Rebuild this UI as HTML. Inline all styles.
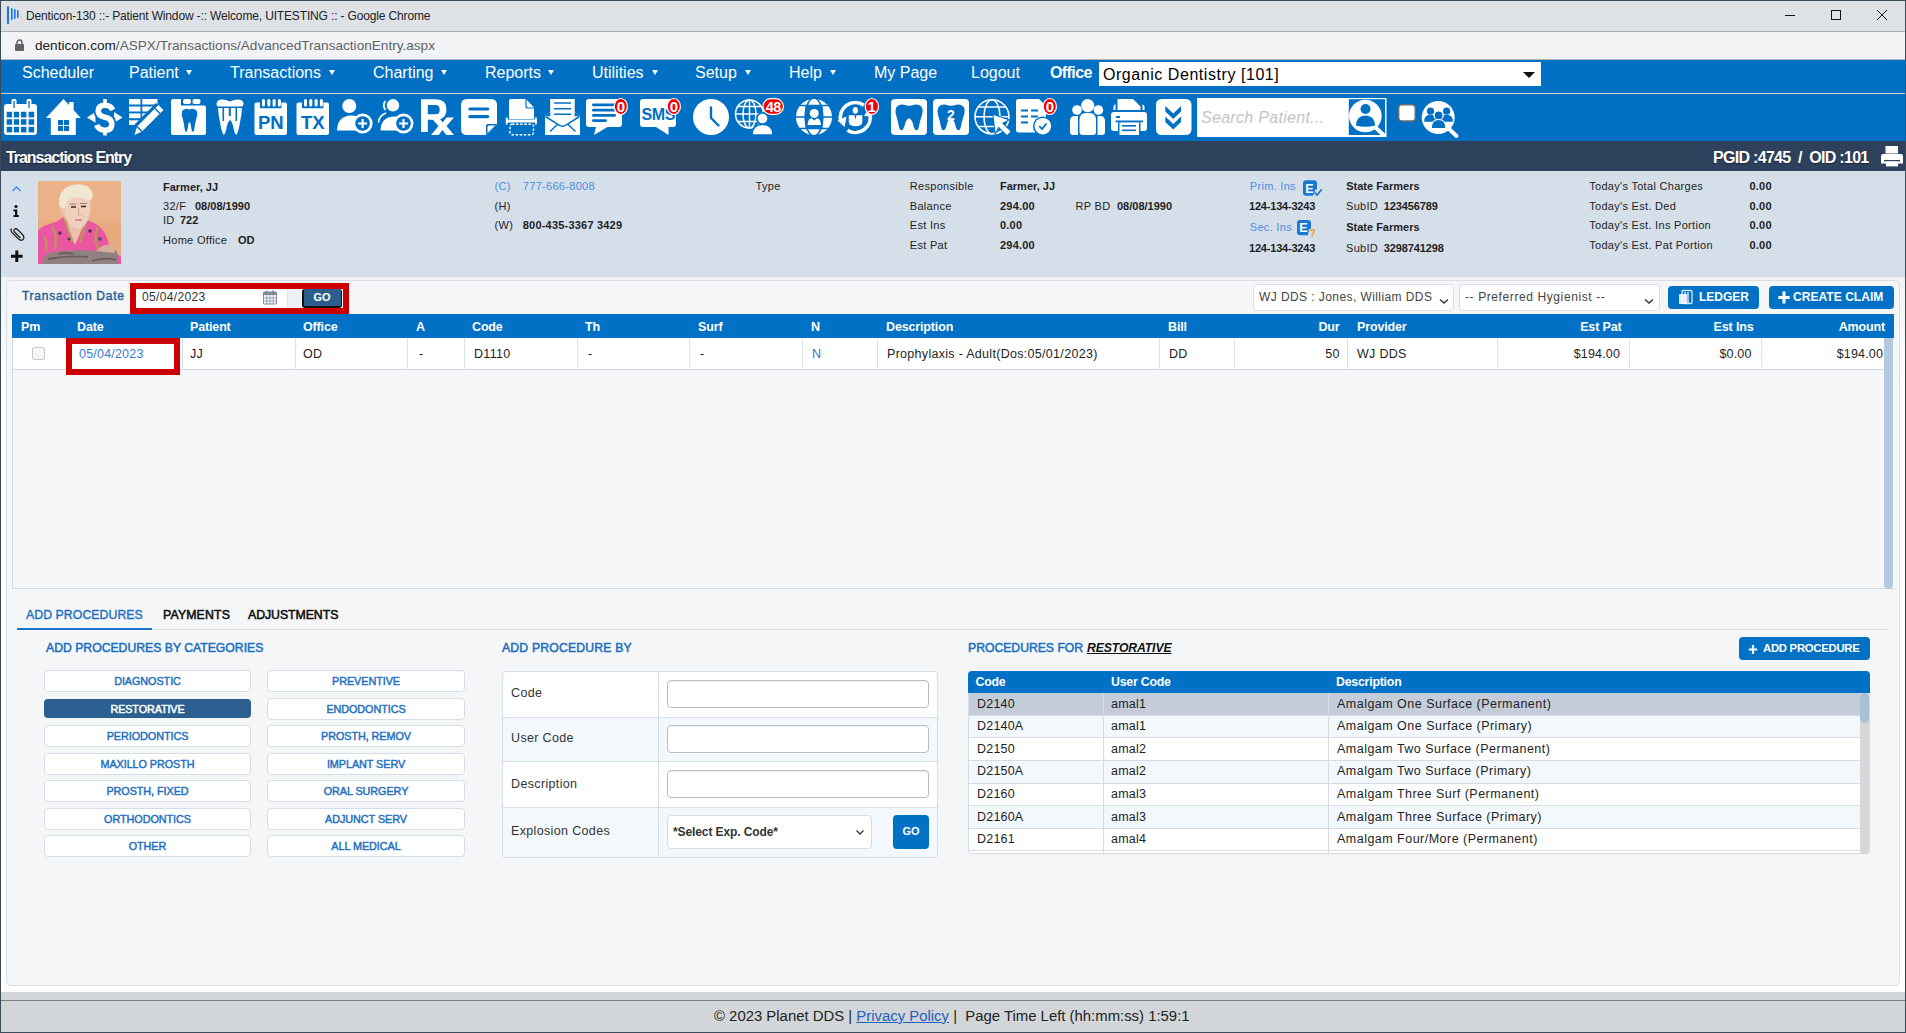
<!DOCTYPE html>
<html><head><meta charset="utf-8">
<style>
*{box-sizing:border-box;margin:0;padding:0}
html,body{width:1906px;height:1033px;overflow:hidden;background:#fff;font-family:"Liberation Sans",sans-serif;color:#222}
.a{position:absolute}
.t{position:absolute;white-space:nowrap;line-height:1}
#frame{position:absolute;left:0;top:0;width:1906px;height:1033px;border:1px solid #3a4b5c;pointer-events:none;z-index:50}
/* chrome */
#titlebar{left:1px;top:1px;width:1904px;height:31px;background:#dee1e6;border-bottom:1px solid #a9abae}
#addrbar{left:1px;top:32px;width:1904px;height:28px;background:#f1f3f4;border-bottom:1px solid #b9b7b3}
#nav{left:1px;top:60px;width:1904px;height:34px;background:#0070c5;border-bottom:1px solid #cdd0d3}
#icons{left:1px;top:94px;width:1904px;height:47px;background:#0070c5}
#darkbar{left:1px;top:141px;width:1904px;height:30px;background:#2d405c}
#panel{left:1px;top:171px;width:1904px;height:105px;background:#d5dfe9}
.nv{position:absolute;top:65px;color:#fff;font-size:16px;line-height:16px;white-space:nowrap}
.arr{position:absolute;top:70px;width:0;height:0;border-left:3px solid transparent;border-right:3px solid transparent;border-top:5px solid #fff}
.ic{position:absolute;top:99px;height:36px}
.badge{position:absolute;top:100px;height:14px;min-width:14px;padding:0 2px;border-radius:7px;background:#e00;border:1px solid #fff;color:#fff;font-weight:bold;font-size:12px;line-height:12px;text-align:center}
.pt{position:absolute;white-space:nowrap;font-size:11px;line-height:11px;color:#1e1e1e}
.pb{font-weight:bold}
.lb{color:#4a8fe0}
</style></head><body>
<div id="frame"></div>
<div id="titlebar" class="a"></div>
<div id="addrbar" class="a"></div>
<div id="nav" class="a"></div>
<div id="icons" class="a"></div>
<div id="darkbar" class="a"></div>
<div id="panel" class="a"></div>
<!-- title bar content -->
<svg class="a" style="left:7px;top:6px" width="12" height="18" viewBox="0 0 12 18"><rect x="0" y="0" width="2" height="18" rx="1" fill="#1a73e8"/><rect x="4" y="2" width="1.6" height="12" rx=".8" fill="#1a73e8"/><rect x="7" y="3" width="1.6" height="10" rx=".8" fill="#1a73e8"/><rect x="10" y="4" width="1.6" height="8" rx=".8" fill="#1a73e8"/></svg>
<div class="t" style="left:26px;top:10px;font-size:12px;color:#202124;letter-spacing:-0.15px">Denticon-130 ::- Patient Window -:: Welcome, UITESTING :: - Google Chrome</div>
<svg class="a" style="left:1784px;top:10px" width="110" height="12" viewBox="0 0 110 12"><rect x="1" y="5" width="10" height="1" fill="#111"/><rect x="47.5" y="0.5" width="9" height="9" fill="none" stroke="#111" stroke-width="1"/><path d="M93 0 L103 10 M103 0 L93 10" stroke="#111" stroke-width="1"/></svg>
<svg class="a" style="left:15px;top:39px" width="9" height="12" viewBox="0 0 9 12"><path d="M2 5 V3.5 A2.5 2.5 0 0 1 7 3.5 V5" fill="none" stroke="#5f6368" stroke-width="1.5"/><rect x="0" y="5" width="9" height="7" rx="1" fill="#5f6368"/></svg>
<div class="t" style="left:35px;top:39px;font-size:13.6px;color:#202124">denticon.com<span style="color:#5f6368">/ASPX/Transactions/AdvancedTransactionEntry.aspx</span></div>

<!-- nav -->
<div class="nv" style="left:22px">Scheduler</div>
<div class="nv" style="left:129px">Patient</div><div class="arr" style="left:186px"></div>
<div class="nv" style="left:230px">Transactions</div><div class="arr" style="left:329px"></div>
<div class="nv" style="left:373px">Charting</div><div class="arr" style="left:441px"></div>
<div class="nv" style="left:485px">Reports</div><div class="arr" style="left:548px"></div>
<div class="nv" style="left:592px">Utilities</div><div class="arr" style="left:652px"></div>
<div class="nv" style="left:695px">Setup</div><div class="arr" style="left:745px"></div>
<div class="nv" style="left:789px">Help</div><div class="arr" style="left:830px"></div>
<div class="nv" style="left:874px">My Page</div>
<div class="nv" style="left:971px">Logout</div>
<div class="nv" style="left:1050px;font-weight:bold;letter-spacing:-0.6px">Office</div>
<div class="a" style="left:1099px;top:62px;width:442px;height:24px;background:#fff"></div>
<div class="t" style="left:1103px;top:67px;font-size:16px;letter-spacing:0.55px;color:#000">Organic Dentistry [101]</div>
<div class="a" style="left:1523px;top:72px;width:0;height:0;border-left:6px solid transparent;border-right:6px solid transparent;border-top:6px solid #111"></div>

<!-- ICONS placeholder -->
<svg class="a" style="left:0;top:94px" width="1500" height="47" viewBox="0 94 1500 47">
<g fill="#fff">
<!-- 1 calendar -->
<rect x="4" y="104" width="33" height="31" rx="3"/>
<rect x="11.5" y="99" width="5" height="10" rx="1.5"/><rect x="26.5" y="99" width="5" height="10" rx="1.5"/>
<g fill="#0070c5"><rect x="13.4" y="101" width="1.3" height="7"/><rect x="28.4" y="101" width="1.3" height="7"/>
<rect x="6.7" y="111.8" width="5.4" height="5.6"/><rect x="13.8" y="111.8" width="5.4" height="5.6"/><rect x="21" y="111.8" width="5.4" height="5.6"/><rect x="28.6" y="111.8" width="5.6" height="5.6"/>
<rect x="6.7" y="119.2" width="5.4" height="5.6"/><rect x="13.8" y="119.2" width="5.4" height="5.6"/><rect x="21" y="119.2" width="5.4" height="5.6"/><rect x="28.6" y="119.2" width="5.6" height="5.6"/>
<rect x="6.7" y="126.8" width="5.4" height="5.6"/><rect x="13.8" y="126.8" width="5.4" height="5.6"/><rect x="21" y="126.8" width="5.4" height="5.6"/><rect x="28.6" y="126.8" width="5.6" height="5.6"/></g>
<!-- 2 house -->
<path d="M46 118 L63.5 99 L69 105 V102 H73.6 V110 L80.7 118 H75.8 V135 H50.8 V118 Z"/>
<g fill="#0070c5"><rect x="58" y="120" width="5" height="5"/><rect x="64" y="120" width="5" height="5"/><rect x="58" y="126" width="5" height="5"/><rect x="64" y="126" width="5" height="5"/></g>
<!-- 3 dollar -->
<path d="M87 117.4 L95.5 112 V122.8 Z M122.6 117.4 L114.1 112 V122.8 Z"/>
<path d="M112.8 110 Q110.5 105.2 105 105.2 Q98.2 105.2 98.2 111 Q98.2 115.8 105 117.2 Q111.8 118.6 111.8 124.2 Q111.8 130.2 105 130.2 Q98.8 130.2 96.6 125" fill="none" stroke="#0070c5" stroke-width="9"/>
<path d="M112.8 110 Q110.5 105.2 105 105.2 Q98.2 105.2 98.2 111 Q98.2 115.8 105 117.2 Q111.8 118.6 111.8 124.2 Q111.8 130.2 105 130.2 Q98.8 130.2 96.6 125" fill="none" stroke="#fff" stroke-width="5.6"/>
<rect x="103.2" y="99" width="3.6" height="5"/><rect x="103.2" y="131" width="3.6" height="4.5"/>
<!-- 4 edit -->
<rect x="129" y="99" width="11.5" height="5.5"/><rect x="142.3" y="99" width="15.2" height="5.5"/>
<rect x="129" y="106.5" width="11.5" height="5"/><rect x="142.3" y="106.5" width="12" height="5"/>
<rect x="129" y="113.4" width="11.5" height="4.8"/><rect x="142.3" y="113.4" width="6" height="4.8"/>
<rect x="129" y="120.3" width="11.5" height="4.6"/>
<path d="M131 137 L135 124 L156 103 L167 114 L146 135 Z" fill="#0070c5"/>
<path d="M134.5 135 L137 126.5 L158.5 105 L163.5 110 L142 131.5 Z"/>
<path d="M155 108.5 L160 113.5" stroke="#0070c5" stroke-width="1.5"/>
<path d="M137 126.5 L142 131.5" stroke="#0070c5" stroke-width="1.5"/>
<!-- 5 tooth card -->
<path d="M171 101 Q171 99 173 99 H181 V105.5 H204 Q206 105.5 206 107.5 V133 Q206 135 204 135 H173 Q171 135 171 133 Z"/>
<rect x="183" y="99" width="8" height="5" rx="2"/><rect x="192.5" y="99" width="8" height="5" rx="2"/>
<path fill="#0070c5" d="M182.5 110.5 Q186 107.5 189.5 109.5 Q193 107.5 196.5 110.5 Q198 113 196.5 118 Q195 123 194.5 128 Q194 132.5 192 131.5 Q191 127 190.5 123.5 Q189.5 121 188.5 123.5 Q188 127 187 131.5 Q185 132.5 184.5 128 Q184 123 182.5 118 Q181 113 182.5 110.5 Z"/>
<!-- 6 crown tooth -->
<path d="M216.5 104 Q216.5 99.5 222 99.5 Q226 99.5 230 101.5 Q234 99.5 238 99.5 Q243.5 99.5 243.5 104 Q243.5 106.5 241.5 106.5 H218.5 Q216.5 106.5 216.5 104 Z"/>
<path d="M218 108 H242 Q241.5 116 240 122 Q239 130 236.5 135 Q234.5 134 233.5 128 Q232 121 230 120 Q228 121 226.5 128 Q225.5 134 223.5 135 Q221 130 220 122 Q218.5 116 218 108 Z"/>
<g fill="#0070c5"><rect x="222.5" y="108" width="1.6" height="13"/><rect x="228.8" y="108" width="2" height="8"/><rect x="235.5" y="108" width="1.6" height="13"/></g>
<!-- 7 PN -->
<path d="M254.5 104.5 Q254.5 102.5 256.5 102.5 H260 V108.3 H281.4 V102.5 H285 Q287 102.5 287 104.5 V133 Q287 135 285 135 H256.5 Q254.5 135 254.5 133 Z"/>
<rect x="262" y="99" width="3" height="7.5" rx="1.5"/><rect x="267.3" y="99" width="3" height="7.5" rx="1.5"/><rect x="272.6" y="99" width="3" height="7.5" rx="1.5"/><rect x="277.9" y="99" width="3" height="7.5" rx="1.5"/>
<text x="270.8" y="129" fill="#0070c5" font-family="Liberation Sans" font-weight="bold" font-size="18.5" text-anchor="middle">PN</text>
<!-- 8 TX -->
<path d="M296.5 104.5 Q296.5 102.5 298.5 102.5 H302 V108.3 H323.4 V102.5 H327 Q329 102.5 329 104.5 V133 Q329 135 327 135 H298.5 Q296.5 135 296.5 133 Z"/>
<rect x="304" y="99" width="3" height="7.5" rx="1.5"/><rect x="309.3" y="99" width="3" height="7.5" rx="1.5"/><rect x="314.6" y="99" width="3" height="7.5" rx="1.5"/><rect x="319.9" y="99" width="3" height="7.5" rx="1.5"/>
<text x="312.8" y="129" fill="#0070c5" font-family="Liberation Sans" font-weight="bold" font-size="18.5" text-anchor="middle">TX</text>
<!-- 9 person+ -->
<circle cx="349.3" cy="106" r="7"/>
<path d="M337 130.5 Q337.5 116 351 115.5 Q358 115.5 362 120 L356 130.5 Z"/>
<circle cx="362.6" cy="123.5" r="10"/><circle cx="362.6" cy="123.5" r="7.3" fill="#0070c5"/>
<path d="M362.6 119 V128 M358.1 123.5 H367.1" stroke="#fff" stroke-width="2.2"/>
<!-- 10 person2+ -->
<circle cx="393" cy="105.3" r="6.2"/>
<path d="M385.5 101 Q382 105 385.5 110" fill="none" stroke="#fff" stroke-width="1.8"/>
<path d="M386 113 Q379 115.5 378.5 122.5" fill="none" stroke="#fff" stroke-width="1.8"/>
<path d="M380.5 130.5 Q381 117 394 116.5 Q401 116.5 404 120 L398 130.5 Z"/>
<circle cx="403.5" cy="123.5" r="10"/><circle cx="403.5" cy="123.5" r="7.3" fill="#0070c5"/>
<path d="M403.5 119 V128 M399 123.5 H408 " stroke="#fff" stroke-width="2.2"/>
<!-- 11 Rx -->
<path d="M421 99.2 H436 Q446.5 99.2 446.5 109.5 Q446.5 117 440 119.3 L443 123 L437.5 123 L434 119.8 H427.8 V132 H421 Z M427.8 105 V114.3 H435.5 Q439.7 114.3 439.7 109.7 Q439.7 105 435.5 105 Z"/>
<path d="M430.8 117.4 H438.5 L442.5 122.5 L446.5 117.4 H454 L446.5 126 L454 135 H446.3 L442.5 130 L438.7 135 H431 L438.5 126 Z"/>
<!-- 12 note -->
<path d="M467 99 H491 Q497 99 497 105 V124 L486 135 H467 Q461 135 461 129 V105 Q461 99 467 99 Z"/>
<g fill="#0070c5"><rect x="468.3" y="107.4" width="21" height="3.2" rx="1.6"/><rect x="468.3" y="115" width="21" height="3.2" rx="1.6"/></g>
<path d="M497 124 L486 135 V126 Q486 124 488 124 Z" fill="#0070c5"/>
<path d="M495 125.5 L487.5 133 V127 Q487.5 125.5 489 125.5 Z"/>
<!-- 13 scan doc -->
<path d="M509 101 Q509 99 511 99 H526 L534 107.5 V119 H509 Z"/>
<path d="M526 99 V106 Q526 108 528 108 H534" fill="none" stroke="#0070c5" stroke-width="1.2"/>
<rect x="506" y="119.5" width="30.5" height="3"/>
<rect x="505.8" y="117.5" width="1.8" height="7"/><rect x="535" y="117.5" width="1.8" height="7"/>
<rect x="510" y="124.2" width="23.5" height="10.5" rx="2" fill="none" stroke="#fff" stroke-width="1.4" stroke-dasharray="2.5 1.6"/>
<!-- 14 mail -->
<path d="M545 116 L550.2 112 V99 H574.7 V112 L580 116 V135 H545 Z"/>
<g stroke="#0070c5" stroke-width="1.5" fill="none"><path d="M554 103 H571 M554 108.7 H571 M554 114.3 H571"/><path d="M545.5 116.5 L559 125.2 Q562.5 127.2 566 125.2 L579.5 116.5"/><path d="M550 131.5 L557.5 124.5 M575.5 131.5 L568 124.5"/></g>
<path d="M545 116 L550.2 112 V116.5 Z M580 116 L574.7 112 V116.5 Z" fill="#0070c5"/>
<!-- 15 chat -->
<path d="M589 99 H619 Q622 99 622 102 V124 Q622 127 619 127 H607.5 L594 135 L596 127 H589 Q586 127 586 124 V102 Q586 99 589 99 Z"/>
<g fill="#0070c5"><rect x="592" y="103.5" width="24" height="2.8" rx="1.4"/><rect x="592" y="108.8" width="24" height="2.8" rx="1.4"/><rect x="592" y="114" width="24" height="2.8" rx="1.4"/><rect x="592" y="119.3" width="15" height="2.8" rx="1.4"/></g>
<!-- 16 SMS -->
<path d="M643 99 H673 Q676 99 676 102 V124 Q676 127 673 127 H668.5 V135 L656 127 H643 Q640 127 640 124 V102 Q640 99 643 99 Z"/>
<text x="658.3" y="119.5" fill="#0070c5" font-family="Liberation Sans" font-weight="bold" font-size="16" text-anchor="middle" letter-spacing="-0.3">SMS</text>
<!-- 17 clock -->
<circle cx="711" cy="117" r="18"/>
<path d="M711 107.5 V118 L718.5 125.5" fill="none" stroke="#0070c5" stroke-width="2.4" stroke-linecap="round" stroke-linejoin="round"/>
<!-- 18 globe + person -->
<g fill="none" stroke="#fff" stroke-width="1.5"><circle cx="749.5" cy="114" r="14"/><ellipse cx="749.5" cy="114" rx="6.5" ry="14"/><path d="M749.5 100 V128 M735.5 114 H763.5 M737.5 106.5 H761.5 M737.5 121.5 H761.5"/></g>
<circle cx="762.5" cy="118.5" r="6.5" fill="#0070c5"/>
<circle cx="762.5" cy="118.5" r="4.8"/>
<path d="M752 135 Q752 124.5 762.5 124.5 Q773 124.5 773 135 Z" stroke="#0070c5" stroke-width="1.5"/>
<!-- 19 globe person -->
<circle cx="814" cy="117" r="18"/>
<path d="M805.5 105.5 Q804 117 805.5 128.5 H822.5 Q824 117 822.5 105.5 Z" fill="#0070c5"/>
<g fill="none" stroke="#0070c5" stroke-width="1.6"><path d="M795 105.5 H833 M795 117 H833 M795 128.5 H833"/><ellipse cx="814" cy="117" rx="8.7" ry="19"/></g>
<circle cx="814.2" cy="113.4" r="4.5"/>
<path d="M807.5 125 Q808 118.5 811.5 118.2 L814.2 120.5 L817 118.2 Q820.5 118.5 821 125 Z"/>
<!-- 20 refresh person -->
<path d="M863.9 105.2 A15 15 0 0 0 840.8 121.4" fill="none" stroke="#fff" stroke-width="3.6"/>
<path d="M837.5 120.5 L846.5 116.5 L844.6 127 Z"/>
<path d="M847.4 130.2 A15 15 0 0 0 869.8 113.6" fill="none" stroke="#fff" stroke-width="3.6"/>
<path d="M864 116 L868.5 109 L872.5 116.5 Z"/>
<ellipse cx="855.3" cy="110.3" rx="2.6" ry="3.4"/>
<path d="M848.8 115.3 H862.3 V121.5 Q862.3 126.2 855.5 126.2 Q848.8 126.2 848.8 121.5 Z"/>
<path d="M854.3 115.3 L855.4 119.5 L856.5 115.3 Z" fill="#0070c5"/>
<!-- 21 tooth -->
<rect x="891" y="99" width="36" height="36" rx="4"/>
<path fill="#0070c5" d="M896.5 107 Q899.5 103.8 904 104.8 Q909 106.5 914 104.8 Q919.5 103.8 922 107.5 Q923.5 111 921.5 116.5 Q919.8 121.5 918.8 127 Q918 130.8 915.8 130.2 Q914 129 913 124 Q911.5 118.5 909 118.5 Q906.5 118.5 905 124 Q904 129 902 130.2 Q899.8 130.8 899 127 Q898 121.5 896.5 116.5 Q894.5 111 896.5 107 Z"/>
<!-- 22 tooth 2 -->
<rect x="933" y="99" width="36" height="36" rx="4"/>
<path fill="#0070c5" d="M938.5 107 Q941.5 103.8 946 104.8 Q951 106.5 956 104.8 Q961.5 103.8 964 107.5 Q965.5 111 963.5 116.5 Q961.8 121.5 960.8 127 Q960 130.8 957.8 130.2 Q956 129 955 124 Q953.5 118.5 951 118.5 Q948.5 118.5 947 124 Q946 129 944 130.2 Q941.8 130.8 941 127 Q940 121.5 938.5 116.5 Q936.5 111 938.5 107 Z"/>
<text x="951" y="119.5" font-family="Liberation Sans" font-weight="bold" font-size="14" text-anchor="middle">2</text>
<!-- 23 globe cursor -->
<g fill="none" stroke="#fff" stroke-width="1.6"><circle cx="992" cy="116.8" r="17"/><ellipse cx="992" cy="116.8" rx="8" ry="17"/><path d="M975 116.8 H1009 M978 107 H1006 M978 126.5 H1006"/></g>
<path d="M993.5 115 L1008 120 L1002 123 L1010.5 131.5 L1007 135 L998.5 126.5 L995.5 132.5 Z" stroke="#0070c5" stroke-width="2"/>
<path d="M993.5 115 L1008 120 L1002 123 L1010.5 131.5 L1007 135 L998.5 126.5 L995.5 132.5 Z"/>
<!-- 24 doc check -->
<path d="M1018.5 99 H1039 L1046 106 V132.5 H1018.5 Q1016 132.5 1016 130 V101.5 Q1016 99 1018.5 99 Z"/>
<g fill="#0070c5"><rect x="1021" y="109.5" width="7" height="2"/><rect x="1031" y="109.5" width="7" height="2"/><rect x="1021" y="115.5" width="7" height="2"/><rect x="1031" y="115.5" width="7" height="2"/><rect x="1021" y="121.5" width="7" height="2"/></g>
<circle cx="1042.8" cy="126.2" r="9.8" fill="#0070c5"/>
<circle cx="1042.8" cy="126.2" r="8.3"/>
<path d="M1039.3 126 L1042 129 L1046.5 123.5" fill="none" stroke="#0070c5" stroke-width="1.8"/>
<!-- 25 people -->
<circle cx="1087.7" cy="105.6" r="6.6"/>
<circle cx="1077" cy="110" r="4.8"/><circle cx="1098.4" cy="110" r="4.8"/>
<path d="M1079.5 132 V120 Q1079.5 113 1086 113 H1089.5 Q1096 113 1096 120 V132 Q1096 135 1093 135 H1082.5 Q1079.5 135 1079.5 132 Z"/>
<path d="M1070 132 V121 Q1070 116 1075 116 H1078 V135 H1073 Q1070 135 1070 132 Z M1105 132 V121 Q1105 116 1100 116 H1097.5 V135 H1102 Q1105 135 1105 132 Z"/>
<!-- 26 printer -->
<path d="M1117.5 110 V99 H1133 L1140.5 106.5 V110 Z"/>
<path d="M1113.5 106 L1115.5 104 V110 H1113.5 Z M1144.5 106 L1142.5 104 V110 H1144.5 Z"/>
<path d="M1114 112 H1144 Q1147 112 1147 115 V128 Q1147 131 1144 131 H1114 Q1111 131 1111 128 V115 Q1111 112 1114 112 Z"/>
<rect x="1116" y="116" width="4" height="2" fill="#0070c5"/>
<rect x="1115.5" y="120.5" width="27.5" height="1.8" fill="#0070c5"/>
<rect x="1118" y="122.3" width="22.5" height="13" fill="#0070c5"/>
<rect x="1119.5" y="122.5" width="19.5" height="12.5"/>
<rect x="1122" y="125" width="14" height="1.6" fill="#0070c5"/><rect x="1122" y="129.5" width="14" height="1.6" fill="#0070c5"/>
<!-- 27 chevron box -->
<rect x="1156" y="99" width="35.5" height="36" rx="5.5"/>
<path fill="#0070c5" d="M1165.3 106 L1173.3 113.5 L1181 106 V111.5 L1173.3 119 L1165.3 111.5 Z M1165.3 116.5 L1173.3 124 L1181 116.5 V122 L1173.3 129.5 L1165.3 122 Z"/>
<!-- search -->
<rect x="1197" y="98" width="189.5" height="39"/>
<rect x="1348.8" y="99.2" width="36.2" height="35.8" fill="#0070c5"/>
<circle cx="1365.3" cy="116" r="16.3"/>
<path d="M1375 127 L1383.5 135" stroke="#fff" stroke-width="4" stroke-linecap="round"/>
<circle cx="1365.5" cy="109" r="5" fill="#0070c5"/>
<path d="M1355.8 125.5 Q1356.5 115.5 1365.5 115.5 Q1374.5 115.5 1375.2 125.5 Q1365.5 128 1355.8 125.5 Z" fill="#0070c5"/>
<!-- checkbox -->
<rect x="1398.7" y="104.7" width="16.5" height="16.3" rx="3" stroke="#6d6d6d" stroke-width="1.4"/>
<!-- group search -->
<circle cx="1438.2" cy="117.5" r="16.5"/>
<path d="M1448 128 L1456.5 136" stroke="#fff" stroke-width="4" stroke-linecap="round"/>
<g fill="#0070c5"><circle cx="1430.5" cy="111.2" r="3.6"/><circle cx="1446.6" cy="111.2" r="3.6"/><path d="M1424.2 121.8 Q1424.2 114.8 1430.5 114.8 Q1436.8 114.8 1436.8 121.8 Z M1440.3 121.8 Q1440.3 114.8 1446.6 114.8 Q1452.9 114.8 1452.9 121.8 Z"/></g>
<circle cx="1438.6" cy="115.5" r="4.5" fill="#0070c5" stroke="#fff" stroke-width="1.2"/>
<path d="M1431.3 128.5 Q1431.3 119.5 1438.6 119.5 Q1445.9 119.5 1445.9 128.5 Z" fill="#0070c5" stroke="#fff" stroke-width="1.2"/>
</g>
<!-- badges -->
<g font-family="Liberation Sans" font-weight="bold" text-anchor="middle" fill="#fff">
<ellipse cx="620.8" cy="106.5" rx="6.6" ry="8" fill="#f20000" stroke="#fff" stroke-width="1.2"/><text x="620.8" y="112" font-size="15">0</text>
<ellipse cx="673.8" cy="106.5" rx="6.6" ry="8" fill="#f20000" stroke="#fff" stroke-width="1.2"/><text x="673.8" y="112" font-size="15">0</text>
<rect x="763" y="98.6" width="20.4" height="15.8" rx="7.9" fill="#f20000" stroke="#fff" stroke-width="1.2"/><text x="773.2" y="112" font-size="14.5" letter-spacing="-0.6">48</text>
<ellipse cx="871.9" cy="106.5" rx="6.6" ry="8" fill="#f20000" stroke="#fff" stroke-width="1.2"/><text x="871.6" y="112" font-size="15">1</text>
<ellipse cx="1049.8" cy="106.5" rx="6.6" ry="8" fill="#f20000" stroke="#fff" stroke-width="1.2"/><text x="1049.8" y="112" font-size="15">0</text>
</g>
</svg>
<div class="t" style="left:1201px;top:110px;font-size:16px;font-style:italic;color:#c4c4c4;letter-spacing:0.3px">Search Patient...</div>


<!-- dark bar -->
<div class="t" style="left:6px;top:150px;font-size:16px;font-weight:bold;color:#fff;letter-spacing:-1.05px;text-shadow:0 1px 1px rgba(0,0,0,.4)">Transactions Entry</div>
<div class="t" style="left:1713px;top:150px;font-size:16px;font-weight:bold;color:#fff;letter-spacing:-0.7px;text-shadow:0 1px 1px rgba(0,0,0,.4)">PGID :4745&nbsp; /&nbsp; OID :101</div>


<svg class="a" style="left:1878px;top:144px" width="27" height="24" viewBox="1878 144 27 24"><rect x="1885.5" y="146" width="12.5" height="7.5" fill="#fff"/><path d="M1883 154 H1901 Q1903 154 1903 156 V163.5 H1881 V156 Q1881 154 1883 154 Z" fill="#fff"/><rect x="1884" y="160" width="16" height="1.4" fill="#2d405c"/><rect x="1886" y="161.4" width="12" height="5" fill="#fff"/></svg>
<svg class="a" style="left:0;top:171px" width="40" height="105" viewBox="0 171 40 105"><path d="M12.5 191 L16.5 187 L20.5 191" fill="none" stroke="#3b8be6" stroke-width="1.5"/><circle cx="16" cy="206.5" r="1.6" fill="#111"/><path d="M13.5 209.5 H17.3 V215 H18.8 V217 H13.5 V215 H15 V211.5 H13.5 Z" fill="#111"/><path d="M20.5 236 L15 230.5 Q13 228.5 14.5 227.3 Q16 226 18 228 L22.5 232.5 Q25 235.5 23 237.5 Q21 239.3 18.3 236.8 L12.5 231 Q10 228 11.5 226.5" fill="none" stroke="#222" stroke-width="1.3" transform="translate(0,2)"/><path d="M16.8 250.5 V262 M11 256.2 H22.6" stroke="#111" stroke-width="3"/></svg>
<svg class="a" style="left:38px;top:181px" width="83" height="83" viewBox="0 0 83 83"><defs><filter id="bl" x="-5%" y="-5%" width="110%" height="110%"><feGaussianBlur stdDeviation="0.7"/></filter><clipPath id="cp"><rect width="83" height="83"/></clipPath></defs><rect width="83" height="83" fill="#e8aa7f"/><g filter="url(#bl)" clip-path="url(#cp)"><rect x="0" y="0" width="83" height="40" fill="#ebb289"/><path d="M27 42 Q26 52 30 62 L44 64 Q48 52 47 42 Z" fill="#eabfac"/><path d="M0 83 V50 Q3 45 12 43 Q20 41 25 36 L30 48 L37 64 L44 48 L48 39 Q56 41 62 46 Q68 52 70 60 L72 66 L83 76 V83 Z" fill="#ea56a0"/><path d="M14 46 Q20 56 17 68 M60 46 Q55 56 60 68 M27 38 Q30 50 35 62 M48 40 Q45 52 42 62 M6 56 Q10 62 8 70" stroke="#b99a52" stroke-width="2.6" fill="none" opacity=".85"/><circle cx="22" cy="52" r="1.8" fill="#4e3560"/><circle cx="52" cy="50" r="1.8" fill="#4e3560"/><circle cx="62" cy="58" r="1.8" fill="#5d4580"/><circle cx="31" cy="58" r="1.5" fill="#4e3560"/><path d="M4 83 Q5 73 14 71 Q38 68 60 70 Q68 64 75 66 Q81 70 80 83 Z" fill="#908080"/><path d="M58 70 Q66 62 74 64 Q79 67 76 72 Z" fill="#d9ad9b"/><path d="M10 78 Q30 74 50 76 M54 80 Q68 76 78 79 M20 73 Q28 71 36 73" stroke="#6a5c5e" stroke-width="1.8" fill="none"/><path d="M26 20 Q25 36 31 43 Q37 49 43 47 Q50 43 52 32 Q53 24 52 16 Q42 12 26 20 Z" fill="#f1cfbf"/><ellipse cx="25" cy="29" rx="2.5" ry="4" fill="#ebc3b0"/><path d="M21 24 Q20 8 34 4 Q48 1 54 10 Q56 17 52 20 Q44 15 34 17 Q28 19 27 27 Q23 28 21 24 Z" fill="#efe7cf"/><path d="M33 26 H38 M43 25.5 H48" stroke="#3e2a26" stroke-width="1.7"/><path d="M31.5 23 H38.5 M42 22.5 H49" stroke="#8a6a5a" stroke-width=".8"/><path d="M37 39 H44" stroke="#c7848a" stroke-width="1.6"/><path d="M41 27 L40 34 L43 34" stroke="#d3a08f" stroke-width="1" fill="none"/></g></svg>
<div class="t" style="left:163px;top:181.71px;font-size:11px;line-height:11px;color:#1e1e1e;font-weight:bold;">Farmer, JJ</div>
<div class="t" style="left:163px;top:200.71px;font-size:11px;line-height:11px;color:#1e1e1e;letter-spacing:0.3px;">32/F</div>
<div class="t" style="left:195px;top:200.71px;font-size:11px;line-height:11px;color:#1e1e1e;font-weight:bold;">08/08/1990</div>
<div class="t" style="left:163px;top:215.11px;font-size:11px;line-height:11px;color:#1e1e1e;letter-spacing:0.3px;">ID</div>
<div class="t" style="left:180px;top:215.11px;font-size:11px;line-height:11px;color:#1e1e1e;font-weight:bold;">722</div>
<div class="t" style="left:163px;top:235.11px;font-size:11px;line-height:11px;color:#1e1e1e;letter-spacing:0.3px;">Home Office</div>
<div class="t" style="left:238px;top:235.11px;font-size:11px;line-height:11px;color:#1e1e1e;font-weight:bold;">OD</div>
<div class="t" style="left:494.5px;top:180.71px;font-size:11px;line-height:11px;color:#4a8fe0;letter-spacing:0.3px;">(C)</div>
<div class="t" style="left:522.8px;top:180.71px;font-size:11px;line-height:11px;color:#4a8fe0;letter-spacing:0.3px;">777-666-8008</div>
<div class="t" style="left:494.5px;top:200.71px;font-size:11px;line-height:11px;color:#1e1e1e;letter-spacing:0.3px;">(H)</div>
<div class="t" style="left:494.5px;top:219.71px;font-size:11px;line-height:11px;color:#1e1e1e;letter-spacing:0.3px;">(W)</div>
<div class="t" style="left:522.8px;top:219.71px;font-size:11px;line-height:11px;color:#1e1e1e;font-weight:bold;letter-spacing:0.2px;">800-435-3367 3429</div>
<div class="t" style="left:755.5px;top:180.71px;font-size:11px;line-height:11px;color:#1e1e1e;letter-spacing:0.3px;">Type</div>
<div class="t" style="left:909.8px;top:180.71px;font-size:11px;line-height:11px;color:#1e1e1e;letter-spacing:0.3px;">Responsible</div>
<div class="t" style="left:1000px;top:180.71px;font-size:11px;line-height:11px;color:#1e1e1e;font-weight:bold;">Farmer, JJ</div>
<div class="t" style="left:909.8px;top:200.71px;font-size:11px;line-height:11px;color:#1e1e1e;letter-spacing:0.3px;">Balance</div>
<div class="t" style="left:1000px;top:200.71px;font-size:11px;line-height:11px;color:#1e1e1e;font-weight:bold;letter-spacing:0.2px;">294.00</div>
<div class="t" style="left:1075.5px;top:200.71px;font-size:11px;line-height:11px;color:#1e1e1e;letter-spacing:0.3px;">RP BD</div>
<div class="t" style="left:1117px;top:200.71px;font-size:11px;line-height:11px;color:#1e1e1e;font-weight:bold;">08/08/1990</div>
<div class="t" style="left:909.8px;top:219.71px;font-size:11px;line-height:11px;color:#1e1e1e;letter-spacing:0.3px;">Est Ins</div>
<div class="t" style="left:1000px;top:219.71px;font-size:11px;line-height:11px;color:#1e1e1e;font-weight:bold;letter-spacing:0.2px;">0.00</div>
<div class="t" style="left:909.8px;top:239.71px;font-size:11px;line-height:11px;color:#1e1e1e;letter-spacing:0.3px;">Est Pat</div>
<div class="t" style="left:1000px;top:239.71px;font-size:11px;line-height:11px;color:#1e1e1e;font-weight:bold;letter-spacing:0.2px;">294.00</div>
<div class="t" style="left:1249.8px;top:180.91px;font-size:11px;line-height:11px;color:#4a8fe0;letter-spacing:0.3px;">Prim. Ins</div>
<div class="t" style="left:1346.2px;top:180.91px;font-size:11px;line-height:11px;color:#1e1e1e;font-weight:bold;">State Farmers</div>
<div class="t" style="left:1249px;top:200.71px;font-size:11px;line-height:11px;color:#1e1e1e;font-weight:bold;letter-spacing:-0.2px;">124-134-3243</div>
<div class="t" style="left:1346px;top:200.71px;font-size:11px;line-height:11px;color:#1e1e1e;letter-spacing:0.3px;">SubID</div>
<div class="t" style="left:1383.7px;top:200.71px;font-size:11px;line-height:11px;color:#1e1e1e;font-weight:bold;letter-spacing:-0.1px;">123456789</div>
<div class="t" style="left:1249.8px;top:222.21px;font-size:11px;line-height:11px;color:#4a8fe0;letter-spacing:0.3px;">Sec. Ins</div>
<div class="t" style="left:1346.2px;top:222.21px;font-size:11px;line-height:11px;color:#1e1e1e;font-weight:bold;">State Farmers</div>
<div class="t" style="left:1249px;top:243.01px;font-size:11px;line-height:11px;color:#1e1e1e;font-weight:bold;letter-spacing:-0.2px;">124-134-3243</div>
<div class="t" style="left:1346px;top:243.01px;font-size:11px;line-height:11px;color:#1e1e1e;letter-spacing:0.3px;">SubID</div>
<div class="t" style="left:1383.7px;top:243.01px;font-size:11px;line-height:11px;color:#1e1e1e;font-weight:bold;letter-spacing:-0.1px;">3298741298</div>
<svg class="a" style="left:1296px;top:179px" width="30" height="60" viewBox="1296 179 30 60"><rect x="1303" y="180.3" width="14" height="15.5" rx="3" fill="#1a78d2"/><text x="1309.5" y="192.8" fill="#fff" font-family="Liberation Sans" font-weight="bold" font-size="12.5" text-anchor="middle">E</text><path d="M1312.5 197 L1315.5 189.5 L1324 188 V198 Z" fill="#d5dfe9"/><path d="M1314.5 192.3 L1317.2 195 L1321.8 189.3" fill="none" stroke="#1a78d2" stroke-width="1.7"/><rect x="1297" y="220" width="14" height="15.3" rx="3" fill="#1a78d2"/><text x="1303.5" y="232.3" fill="#fff" font-family="Liberation Sans" font-weight="bold" font-size="12.5" text-anchor="middle">E</text><path d="M1307.5 238 L1309 229 L1317 228 V238 Z" fill="#d5dfe9"/><text x="1312.5" y="237" fill="#f39a1e" font-family="Liberation Sans" font-weight="bold" font-size="10" text-anchor="middle">?</text></svg>
<div class="t" style="left:1589.2px;top:180.71px;font-size:11px;line-height:11px;color:#1e1e1e;letter-spacing:0.3px;">Today&#x27;s Total Charges</div>
<div class="t" style="left:1749.5px;top:180.71px;font-size:11px;line-height:11px;color:#1e1e1e;font-weight:bold;letter-spacing:0.2px;">0.00</div>
<div class="t" style="left:1589.2px;top:200.71px;font-size:11px;line-height:11px;color:#1e1e1e;letter-spacing:0.3px;">Today&#x27;s Est. Ded</div>
<div class="t" style="left:1749.5px;top:200.71px;font-size:11px;line-height:11px;color:#1e1e1e;font-weight:bold;letter-spacing:0.2px;">0.00</div>
<div class="t" style="left:1589.2px;top:219.71px;font-size:11px;line-height:11px;color:#1e1e1e;letter-spacing:0.3px;">Today&#x27;s Est. Ins Portion</div>
<div class="t" style="left:1749.5px;top:219.71px;font-size:11px;line-height:11px;color:#1e1e1e;font-weight:bold;letter-spacing:0.2px;">0.00</div>
<div class="t" style="left:1589.2px;top:239.71px;font-size:11px;line-height:11px;color:#1e1e1e;letter-spacing:0.3px;">Today&#x27;s Est. Pat Portion</div>
<div class="t" style="left:1749.5px;top:239.71px;font-size:11px;line-height:11px;color:#1e1e1e;font-weight:bold;letter-spacing:0.2px;">0.00</div>
<div class="a" style="left:1px;top:277px;width:1904px;height:110px;background:linear-gradient(#f2f2f2,#f2f2f2 8px,#fff)"></div>
<div class="a" style="left:1px;top:276px;width:1904px;height:1px;background:#d8dce6"></div>
<div class="a" style="left:6px;top:280px;width:1894px;height:706px;background:#f5f6f8;border:1px solid #d9dee7;border-radius:5px"></div>
<div class="t" style="left:22px;top:290.09px;font-size:12px;line-height:12px;color:#2b5f93;letter-spacing:0.73px;-webkit-text-stroke:0.45px #2b5f93;">Transaction Date</div>
<div class="a" style="left:130px;top:283px;width:219px;height:31px;border:6px solid #cc0000;background:#eef0f3"></div>
<div class="a" style="left:136px;top:289px;width:152px;height:19px;background:#fff;border-right:1px solid #dfe3e8"></div>
<div class="t" style="left:142px;top:291.09px;font-size:12px;line-height:12px;color:#333;letter-spacing:0.35px;">05/04/2023</div>
<svg class="a" style="left:262px;top:289px" width="16" height="16" viewBox="0 0 16 16"><rect x="1.5" y="3" width="13" height="12" rx="1" fill="none" stroke="#7d8a99" stroke-width="1"/><rect x="1.5" y="3" width="13" height="3" fill="#7d8a99"/><path d="M5 1.5 V4.5 M11 1.5 V4.5" stroke="#7d8a99" stroke-width="1.5"/><path d="M1.5 9 H14.5 M1.5 12 H14.5 M4.75 6 V15 M8 6 V15 M11.25 6 V15" stroke="#7d8a99" stroke-width=".8"/></svg>
<div class="a" style="left:302px;top:289px;width:40px;height:19px;background:#2c5e8d;border-radius:3px;border-left:2px solid #111;border-bottom:2px solid #111;border-right:1px solid #111"></div>
<div class="t" style="left:302.0px;width:40px;text-align:center;top:292.01px;font-size:11px;line-height:11px;color:#fff;font-weight:bold;">GO</div>
<div class="a" style="left:1253px;top:284px;width:201px;height:27px;background:#fff;border:1px solid #d8dee8;border-radius:4px"></div>
<div class="t" style="left:1259px;top:291.09px;font-size:12px;line-height:12px;color:#444;letter-spacing:0.42px;">WJ DDS : Jones, William DDS</div>
<svg class="a" style="left:1439px;top:298px" width="10" height="7" viewBox="0 0 10 7"><path d="M1 1.5 L5 5 L9 1.5" fill="none" stroke="#333" stroke-width="1.4"/></svg>
<div class="a" style="left:1459px;top:284px;width:201px;height:27px;background:#fff;border:1px solid #d8dee8;border-radius:4px"></div>
<div class="t" style="left:1465px;top:291.09px;font-size:12px;line-height:12px;color:#444;letter-spacing:0.6px;">-- Preferred Hygienist --</div>
<svg class="a" style="left:1644px;top:298px" width="10" height="7" viewBox="0 0 10 7"><path d="M1 1.5 L5 5 L9 1.5" fill="none" stroke="#333" stroke-width="1.4"/></svg>
<div class="a" style="left:1668px;top:286px;width:91px;height:23px;background:#0071c5;border-radius:4px"></div>
<svg class="a" style="left:1677px;top:289px" width="17" height="17" viewBox="0 0 17 17"><rect x="5" y="1.5" width="10" height="13" rx="1" fill="none" stroke="#fff" stroke-width="1.3" opacity=".85"/><rect x="2" y="5" width="8" height="10" fill="#fff" opacity=".85"/><path d="M8 3 V14 M11 3 V14" stroke="#fff" stroke-width="1.2"/></svg>
<div class="t" style="left:1699px;top:291.09px;font-size:12px;line-height:12px;color:#fff;font-weight:bold;letter-spacing:0.0px;">LEDGER</div>
<div class="a" style="left:1769px;top:286px;width:125px;height:23px;background:#0071c5;border-radius:4px"></div>
<svg class="a" style="left:1778px;top:291px" width="12" height="13" viewBox="0 0 12 13"><path d="M6 0.5 V12.5 M0.3 6.5 H11.7" stroke="#fff" stroke-width="3"/></svg>
<div class="t" style="left:1793px;top:291.09px;font-size:12px;line-height:12px;color:#fff;font-weight:bold;letter-spacing:0.05px;">CREATE CLAIM</div>
<div class="a" style="left:12px;top:314px;width:1882px;height:275px;background:#f5f6f8;border-left:1px solid #d3dbe6;border-bottom:1px solid #cfd8e3"></div>
<div class="a" style="left:12px;top:314px;width:1882px;height:24px;background:#0071c5"></div>
<div class="t" style="left:21px;top:320.53px;font-size:12.5px;line-height:12.5px;color:#fff;font-weight:bold;letter-spacing:-0.15px;">Pm</div>
<div class="t" style="left:77px;top:320.53px;font-size:12.5px;line-height:12.5px;color:#fff;font-weight:bold;letter-spacing:-0.15px;">Date</div>
<div class="t" style="left:190px;top:320.53px;font-size:12.5px;line-height:12.5px;color:#fff;font-weight:bold;letter-spacing:-0.15px;">Patient</div>
<div class="t" style="left:303px;top:320.53px;font-size:12.5px;line-height:12.5px;color:#fff;font-weight:bold;letter-spacing:-0.15px;">Office</div>
<div class="t" style="left:416px;top:320.53px;font-size:12.5px;line-height:12.5px;color:#fff;font-weight:bold;letter-spacing:-0.15px;">A</div>
<div class="t" style="left:472px;top:320.53px;font-size:12.5px;line-height:12.5px;color:#fff;font-weight:bold;letter-spacing:-0.15px;">Code</div>
<div class="t" style="left:585px;top:320.53px;font-size:12.5px;line-height:12.5px;color:#fff;font-weight:bold;letter-spacing:-0.15px;">Th</div>
<div class="t" style="left:698px;top:320.53px;font-size:12.5px;line-height:12.5px;color:#fff;font-weight:bold;letter-spacing:-0.15px;">Surf</div>
<div class="t" style="left:811px;top:320.53px;font-size:12.5px;line-height:12.5px;color:#fff;font-weight:bold;letter-spacing:-0.15px;">N</div>
<div class="t" style="left:886px;top:320.53px;font-size:12.5px;line-height:12.5px;color:#fff;font-weight:bold;letter-spacing:-0.15px;">Description</div>
<div class="t" style="left:1168px;top:320.53px;font-size:12.5px;line-height:12.5px;color:#fff;font-weight:bold;letter-spacing:-0.15px;">Bill</div>
<div class="t" style="left:1357px;top:320.53px;font-size:12.5px;line-height:12.5px;color:#fff;font-weight:bold;letter-spacing:-0.15px;">Provider</div>
<div class="t" style="left:auto;right:566.5px;top:320.53px;font-size:12.5px;line-height:12.5px;color:#fff;font-weight:bold;letter-spacing:-0.15px;">Dur</div>
<div class="t" style="left:auto;right:284.5px;top:320.53px;font-size:12.5px;line-height:12.5px;color:#fff;font-weight:bold;letter-spacing:-0.15px;">Est Pat</div>
<div class="t" style="left:auto;right:152.5px;top:320.53px;font-size:12.5px;line-height:12.5px;color:#fff;font-weight:bold;letter-spacing:-0.15px;">Est Ins</div>
<div class="t" style="left:auto;right:21px;top:320.53px;font-size:12.5px;line-height:12.5px;color:#fff;font-weight:bold;letter-spacing:-0.15px;">Amount</div>
<div class="a" style="left:13px;top:338px;width:1871px;height:32px;background:#fff;border-bottom:1px solid #d3d9e4"></div>
<div class="a" style="left:182px;top:338px;width:1px;height:32px;background:#dde2ea"></div>
<div class="a" style="left:295px;top:338px;width:1px;height:32px;background:#dde2ea"></div>
<div class="a" style="left:407px;top:338px;width:1px;height:32px;background:#dde2ea"></div>
<div class="a" style="left:464px;top:338px;width:1px;height:32px;background:#dde2ea"></div>
<div class="a" style="left:577px;top:338px;width:1px;height:32px;background:#dde2ea"></div>
<div class="a" style="left:689px;top:338px;width:1px;height:32px;background:#dde2ea"></div>
<div class="a" style="left:802px;top:338px;width:1px;height:32px;background:#dde2ea"></div>
<div class="a" style="left:877px;top:338px;width:1px;height:32px;background:#dde2ea"></div>
<div class="a" style="left:1159px;top:338px;width:1px;height:32px;background:#dde2ea"></div>
<div class="a" style="left:1234px;top:338px;width:1px;height:32px;background:#dde2ea"></div>
<div class="a" style="left:1347px;top:338px;width:1px;height:32px;background:#dde2ea"></div>
<div class="a" style="left:1497px;top:338px;width:1px;height:32px;background:#dde2ea"></div>
<div class="a" style="left:1629px;top:338px;width:1px;height:32px;background:#dde2ea"></div>
<div class="a" style="left:1761px;top:338px;width:1px;height:32px;background:#dde2ea"></div>
<div class="a" style="left:32px;top:347px;width:13px;height:13px;background:#f7f7f7;border:1px solid #c9c9c9;border-radius:2px"></div>
<div class="a" style="left:66px;top:338px;width:114px;height:37px;border:6px solid #cc0000"></div>
<div class="t" style="left:79px;top:347.53px;font-size:12.5px;line-height:12.5px;color:#3a7bd5;letter-spacing:0.2px;">05/04/2023</div>
<div class="t" style="left:190px;top:347.53px;font-size:12.5px;line-height:12.5px;color:#1e1e1e;letter-spacing:0.3px;">JJ</div>
<div class="t" style="left:303px;top:347.53px;font-size:12.5px;line-height:12.5px;color:#1e1e1e;letter-spacing:0.3px;">OD</div>
<div class="t" style="left:419px;top:347.53px;font-size:12.5px;line-height:12.5px;color:#1e1e1e;letter-spacing:0.3px;">-</div>
<div class="t" style="left:474px;top:347.53px;font-size:12.5px;line-height:12.5px;color:#1e1e1e;letter-spacing:0.3px;">D1110</div>
<div class="t" style="left:588px;top:347.53px;font-size:12.5px;line-height:12.5px;color:#1e1e1e;letter-spacing:0.3px;">-</div>
<div class="t" style="left:700px;top:347.53px;font-size:12.5px;line-height:12.5px;color:#1e1e1e;letter-spacing:0.3px;">-</div>
<div class="t" style="left:812px;top:347.53px;font-size:12.5px;line-height:12.5px;color:#3a6fc8;letter-spacing:0.3px;">N</div>
<div class="t" style="left:887px;top:347.53px;font-size:12.5px;line-height:12.5px;color:#1e1e1e;letter-spacing:0.3px;">Prophylaxis - Adult(Dos:05/01/2023)</div>
<div class="t" style="left:1169px;top:347.53px;font-size:12.5px;line-height:12.5px;color:#1e1e1e;letter-spacing:0.3px;">DD</div>
<div class="t" style="left:1357px;top:347.53px;font-size:12.5px;line-height:12.5px;color:#1e1e1e;letter-spacing:0.3px;">WJ DDS</div>
<div class="t" style="left:auto;right:566.5px;top:347.53px;font-size:12.5px;line-height:12.5px;color:#1e1e1e;letter-spacing:0.15px;">50</div>
<div class="t" style="left:auto;right:286px;top:347.53px;font-size:12.5px;line-height:12.5px;color:#1e1e1e;letter-spacing:0.15px;">$194.00</div>
<div class="t" style="left:auto;right:154.5px;top:347.53px;font-size:12.5px;line-height:12.5px;color:#1e1e1e;letter-spacing:0.15px;">$0.00</div>
<div class="t" style="left:auto;right:23px;top:347.53px;font-size:12.5px;line-height:12.5px;color:#1e1e1e;letter-spacing:0.15px;">$194.00</div>
<div class="a" style="left:1884px;top:338px;width:9px;height:251px;background:#b3c9dd;border-radius:0 0 5px 5px"></div>
<div class="a" style="left:17px;top:629px;width:1872px;height:1px;background:#d7dce5"></div>
<div class="a" style="left:17px;top:628px;width:135px;height:2px;background:#1a73c7"></div>
<div class="t" style="left:26px;top:609.05px;font-size:12.3px;line-height:12.3px;color:#1a6fc2;letter-spacing:0.05px;-webkit-text-stroke:0.35px #1a6fc2;">ADD PROCEDURES</div>
<div class="t" style="left:163px;top:609.05px;font-size:12.3px;line-height:12.3px;color:#111;letter-spacing:0.15px;-webkit-text-stroke:0.55px #111;">PAYMENTS</div>
<div class="t" style="left:248px;top:609.05px;font-size:12.3px;line-height:12.3px;color:#111;letter-spacing:-0.05px;-webkit-text-stroke:0.55px #111;">ADJUSTMENTS</div>
<div class="t" style="left:46px;top:642.07px;font-size:12.2px;line-height:12.2px;color:#1a6fc2;letter-spacing:0.015px;-webkit-text-stroke:0.5px #1a6fc2;">ADD PROCEDURES BY CATEGORIES</div>
<div class="a" style="left:44px;top:670px;width:207px;height:22px;background:#fff;border:1px solid #d5dde8;border-radius:4px"></div>
<div class="t" style="left:44.0px;width:207px;text-align:center;top:676.03px;font-size:10.8px;line-height:10.8px;color:#1f6fc0;letter-spacing:-0.05px;-webkit-text-stroke:0.45px #1f6fc0;">DIAGNOSTIC</div>
<div class="a" style="left:267px;top:670px;width:198px;height:22px;background:#fff;border:1px solid #d5dde8;border-radius:4px"></div>
<div class="t" style="left:267.0px;width:198px;text-align:center;top:676.03px;font-size:10.8px;line-height:10.8px;color:#1f6fc0;letter-spacing:-0.05px;-webkit-text-stroke:0.45px #1f6fc0;">PREVENTIVE</div>
<div class="a" style="left:44px;top:699px;width:207px;height:19px;background:#2a5f8f;border-radius:4px"></div>
<div class="t" style="left:44.0px;width:207px;text-align:center;top:703.53px;font-size:10.8px;line-height:10.8px;color:#fff;letter-spacing:-0.1px;-webkit-text-stroke:0.5px #fff;">RESTORATIVE</div>
<div class="a" style="left:267px;top:698px;width:198px;height:22px;background:#fff;border:1px solid #d5dde8;border-radius:4px"></div>
<div class="t" style="left:267.0px;width:198px;text-align:center;top:704.03px;font-size:10.8px;line-height:10.8px;color:#1f6fc0;letter-spacing:-0.05px;-webkit-text-stroke:0.45px #1f6fc0;">ENDODONTICS</div>
<div class="a" style="left:44px;top:725px;width:207px;height:22px;background:#fff;border:1px solid #d5dde8;border-radius:4px"></div>
<div class="t" style="left:44.0px;width:207px;text-align:center;top:731.03px;font-size:10.8px;line-height:10.8px;color:#1f6fc0;letter-spacing:-0.05px;-webkit-text-stroke:0.45px #1f6fc0;">PERIODONTICS</div>
<div class="a" style="left:267px;top:725px;width:198px;height:22px;background:#fff;border:1px solid #d5dde8;border-radius:4px"></div>
<div class="t" style="left:267.0px;width:198px;text-align:center;top:731.03px;font-size:10.8px;line-height:10.8px;color:#1f6fc0;letter-spacing:-0.05px;-webkit-text-stroke:0.45px #1f6fc0;">PROSTH, REMOV</div>
<div class="a" style="left:44px;top:752.5px;width:207px;height:22px;background:#fff;border:1px solid #d5dde8;border-radius:4px"></div>
<div class="t" style="left:44.0px;width:207px;text-align:center;top:758.53px;font-size:10.8px;line-height:10.8px;color:#1f6fc0;letter-spacing:-0.05px;-webkit-text-stroke:0.45px #1f6fc0;">MAXILLO PROSTH</div>
<div class="a" style="left:267px;top:752.5px;width:198px;height:22px;background:#fff;border:1px solid #d5dde8;border-radius:4px"></div>
<div class="t" style="left:267.0px;width:198px;text-align:center;top:758.53px;font-size:10.8px;line-height:10.8px;color:#1f6fc0;letter-spacing:-0.05px;-webkit-text-stroke:0.45px #1f6fc0;">IMPLANT SERV</div>
<div class="a" style="left:44px;top:780px;width:207px;height:22px;background:#fff;border:1px solid #d5dde8;border-radius:4px"></div>
<div class="t" style="left:44.0px;width:207px;text-align:center;top:786.03px;font-size:10.8px;line-height:10.8px;color:#1f6fc0;letter-spacing:-0.05px;-webkit-text-stroke:0.45px #1f6fc0;">PROSTH, FIXED</div>
<div class="a" style="left:267px;top:780px;width:198px;height:22px;background:#fff;border:1px solid #d5dde8;border-radius:4px"></div>
<div class="t" style="left:267.0px;width:198px;text-align:center;top:786.03px;font-size:10.8px;line-height:10.8px;color:#1f6fc0;letter-spacing:-0.05px;-webkit-text-stroke:0.45px #1f6fc0;">ORAL SURGERY</div>
<div class="a" style="left:44px;top:807.5px;width:207px;height:22px;background:#fff;border:1px solid #d5dde8;border-radius:4px"></div>
<div class="t" style="left:44.0px;width:207px;text-align:center;top:813.53px;font-size:10.8px;line-height:10.8px;color:#1f6fc0;letter-spacing:-0.05px;-webkit-text-stroke:0.45px #1f6fc0;">ORTHODONTICS</div>
<div class="a" style="left:267px;top:807.5px;width:198px;height:22px;background:#fff;border:1px solid #d5dde8;border-radius:4px"></div>
<div class="t" style="left:267.0px;width:198px;text-align:center;top:813.53px;font-size:10.8px;line-height:10.8px;color:#1f6fc0;letter-spacing:-0.05px;-webkit-text-stroke:0.45px #1f6fc0;">ADJUNCT SERV</div>
<div class="a" style="left:44px;top:835px;width:207px;height:22px;background:#fff;border:1px solid #d5dde8;border-radius:4px"></div>
<div class="t" style="left:44.0px;width:207px;text-align:center;top:841.03px;font-size:10.8px;line-height:10.8px;color:#1f6fc0;letter-spacing:-0.05px;-webkit-text-stroke:0.45px #1f6fc0;">OTHER</div>
<div class="a" style="left:267px;top:835px;width:198px;height:22px;background:#fff;border:1px solid #d5dde8;border-radius:4px"></div>
<div class="t" style="left:267.0px;width:198px;text-align:center;top:841.03px;font-size:10.8px;line-height:10.8px;color:#1f6fc0;letter-spacing:-0.05px;-webkit-text-stroke:0.45px #1f6fc0;">ALL MEDICAL</div>
<div class="t" style="left:502px;top:642.07px;font-size:12.2px;line-height:12.2px;color:#1a6fc2;letter-spacing:0.2px;-webkit-text-stroke:0.5px #1a6fc2;">ADD PROCEDURE BY</div>
<div class="a" style="left:502px;top:671px;width:436px;height:187px;background:#fff;border:1px solid #d5dde8;border-radius:4px;overflow:hidden"></div>
<div class="a" style="left:503px;top:717px;width:434px;height:45px;background:#f3f8fd;border-top:1px solid #d5dde8;border-bottom:1px solid #d5dde8"></div>
<div class="a" style="left:503px;top:807px;width:434px;height:50px;background:#f3f8fd;border-top:1px solid #d5dde8;border-radius:0 0 4px 4px"></div>
<div class="a" style="left:658px;top:672px;width:1px;height:185px;background:#d5dde8"></div>
<div class="t" style="left:511px;top:686.53px;font-size:12.5px;line-height:12.5px;color:#333;letter-spacing:0.35px;">Code</div>
<div class="t" style="left:511px;top:731.53px;font-size:12.5px;line-height:12.5px;color:#333;letter-spacing:0.35px;">User Code</div>
<div class="t" style="left:511px;top:777.53px;font-size:12.5px;line-height:12.5px;color:#333;letter-spacing:0.35px;">Description</div>
<div class="t" style="left:511px;top:825.03px;font-size:12.5px;line-height:12.5px;color:#333;letter-spacing:0.35px;">Explosion Codes</div>
<div class="a" style="left:667px;top:680px;width:262px;height:28px;background:#fff;border:1px solid #b9bec5;border-radius:4px;box-shadow:inset 0 1px 1px rgba(0,0,0,.06)"></div>
<div class="a" style="left:667px;top:725px;width:262px;height:28px;background:#fff;border:1px solid #b9bec5;border-radius:4px;box-shadow:inset 0 1px 1px rgba(0,0,0,.06)"></div>
<div class="a" style="left:667px;top:770px;width:262px;height:28px;background:#fff;border:1px solid #b9bec5;border-radius:4px;box-shadow:inset 0 1px 1px rgba(0,0,0,.06)"></div>
<div class="a" style="left:667px;top:815px;width:205px;height:34px;background:#fff;border:1px solid #d5dde8;border-radius:4px"></div>
<div class="t" style="left:673px;top:825.59px;font-size:12px;line-height:12px;color:#333;font-weight:bold;letter-spacing:-0.1px;">*Select Exp. Code*</div>
<svg class="a" style="left:855px;top:829px" width="10" height="7" viewBox="0 0 10 7"><path d="M1.5 1.5 L5 5 L8.5 1.5" fill="none" stroke="#333" stroke-width="1.3"/></svg>
<div class="a" style="left:893px;top:815px;width:36px;height:34px;background:#0071c5;border-radius:4px"></div>
<div class="t" style="left:893.0px;width:36px;text-align:center;top:826.21px;font-size:11px;line-height:11px;color:#fff;font-weight:bold;">GO</div>
<div class="t" style="left:968px;top:642.07px;font-size:12.2px;line-height:12.2px;color:#1a6fc2;letter-spacing:0.0px;-webkit-text-stroke:0.5px #1a6fc2;">PROCEDURES FOR </div>
<div class="t" style="left:1087px;top:642.07px;font-size:12.2px;line-height:12.2px;color:#111;font-weight:bold;letter-spacing:-0.1px;font-style:italic;text-decoration:underline">RESTORATIVE</div>
<div class="a" style="left:1739px;top:637px;width:131px;height:23px;background:#0071c5;border-radius:4px"></div>
<svg class="a" style="left:1748px;top:643px" width="10" height="12" viewBox="0 0 10 12"><path d="M5 2 V11 M0.8 6.5 H9.2" stroke="#fff" stroke-width="2.2"/></svg>
<div class="t" style="left:1763px;top:642.67px;font-size:11.3px;line-height:11.3px;color:#fff;font-weight:bold;letter-spacing:-0.25px;">ADD PROCEDURE</div>
<div class="a" style="left:968px;top:671px;width:902px;height:183px;background:#fff;border:1px solid #d6dce5;border-radius:4px 4px 3px 3px;overflow:hidden"></div>
<div class="a" style="left:968px;top:671px;width:902px;height:22px;background:#0071c5;border-radius:4px 4px 0 0"></div>
<div class="t" style="left:975.5px;top:675.55px;font-size:12.3px;line-height:12.3px;color:#fff;font-weight:bold;letter-spacing:-0.2px;">Code</div>
<div class="t" style="left:1111px;top:675.55px;font-size:12.3px;line-height:12.3px;color:#fff;font-weight:bold;letter-spacing:-0.2px;">User Code</div>
<div class="t" style="left:1336px;top:675.55px;font-size:12.3px;line-height:12.3px;color:#fff;font-weight:bold;letter-spacing:-0.2px;">Description</div>
<div class="a" style="left:969px;top:693px;width:891px;height:22.5px;background:#c3ccd8;border-bottom:1px solid #d8dbe6"></div>
<div class="t" style="left:977px;top:697.93px;font-size:12.5px;line-height:12.5px;color:#1e1e1e;letter-spacing:0.2px;">D2140</div>
<div class="t" style="left:1111px;top:697.93px;font-size:12.5px;line-height:12.5px;color:#1e1e1e;letter-spacing:0.2px;">amal1</div>
<div class="t" style="left:1337px;top:697.93px;font-size:12.5px;line-height:12.5px;color:#1e1e1e;letter-spacing:0.48px;">Amalgam One Surface (Permanent)</div>
<div class="a" style="left:969px;top:715.5px;width:891px;height:22.5px;background:#f3f8fd;border-bottom:1px solid #d8dbe6"></div>
<div class="t" style="left:977px;top:720.43px;font-size:12.5px;line-height:12.5px;color:#1e1e1e;letter-spacing:0.2px;">D2140A</div>
<div class="t" style="left:1111px;top:720.43px;font-size:12.5px;line-height:12.5px;color:#1e1e1e;letter-spacing:0.2px;">amal1</div>
<div class="t" style="left:1337px;top:720.43px;font-size:12.5px;line-height:12.5px;color:#1e1e1e;letter-spacing:0.48px;">Amalgam One Surface (Primary)</div>
<div class="a" style="left:969px;top:738px;width:891px;height:22.5px;background:#fff;border-bottom:1px solid #d8dbe6"></div>
<div class="t" style="left:977px;top:742.93px;font-size:12.5px;line-height:12.5px;color:#1e1e1e;letter-spacing:0.2px;">D2150</div>
<div class="t" style="left:1111px;top:742.93px;font-size:12.5px;line-height:12.5px;color:#1e1e1e;letter-spacing:0.2px;">amal2</div>
<div class="t" style="left:1337px;top:742.93px;font-size:12.5px;line-height:12.5px;color:#1e1e1e;letter-spacing:0.48px;">Amalgam Two Surface (Permanent)</div>
<div class="a" style="left:969px;top:760.5px;width:891px;height:23.0px;background:#f3f8fd;border-bottom:1px solid #d8dbe6"></div>
<div class="t" style="left:977px;top:765.43px;font-size:12.5px;line-height:12.5px;color:#1e1e1e;letter-spacing:0.2px;">D2150A</div>
<div class="t" style="left:1111px;top:765.43px;font-size:12.5px;line-height:12.5px;color:#1e1e1e;letter-spacing:0.2px;">amal2</div>
<div class="t" style="left:1337px;top:765.43px;font-size:12.5px;line-height:12.5px;color:#1e1e1e;letter-spacing:0.48px;">Amalgam Two Surface (Primary)</div>
<div class="a" style="left:969px;top:783.5px;width:891px;height:22.5px;background:#fff;border-bottom:1px solid #d8dbe6"></div>
<div class="t" style="left:977px;top:788.43px;font-size:12.5px;line-height:12.5px;color:#1e1e1e;letter-spacing:0.2px;">D2160</div>
<div class="t" style="left:1111px;top:788.43px;font-size:12.5px;line-height:12.5px;color:#1e1e1e;letter-spacing:0.2px;">amal3</div>
<div class="t" style="left:1337px;top:788.43px;font-size:12.5px;line-height:12.5px;color:#1e1e1e;letter-spacing:0.48px;">Amalgam Three Surf (Permanent)</div>
<div class="a" style="left:969px;top:806px;width:891px;height:22.5px;background:#f3f8fd;border-bottom:1px solid #d8dbe6"></div>
<div class="t" style="left:977px;top:810.93px;font-size:12.5px;line-height:12.5px;color:#1e1e1e;letter-spacing:0.2px;">D2160A</div>
<div class="t" style="left:1111px;top:810.93px;font-size:12.5px;line-height:12.5px;color:#1e1e1e;letter-spacing:0.2px;">amal3</div>
<div class="t" style="left:1337px;top:810.93px;font-size:12.5px;line-height:12.5px;color:#1e1e1e;letter-spacing:0.48px;">Amalgam Three Surface (Primary)</div>
<div class="a" style="left:969px;top:828.5px;width:891px;height:22.5px;background:#fff;border-bottom:1px solid #d8dbe6"></div>
<div class="t" style="left:977px;top:833.43px;font-size:12.5px;line-height:12.5px;color:#1e1e1e;letter-spacing:0.2px;">D2161</div>
<div class="t" style="left:1111px;top:833.43px;font-size:12.5px;line-height:12.5px;color:#1e1e1e;letter-spacing:0.2px;">amal4</div>
<div class="t" style="left:1337px;top:833.43px;font-size:12.5px;line-height:12.5px;color:#1e1e1e;letter-spacing:0.48px;">Amalgam Four/More (Permanent)</div>
<div class="a" style="left:1103px;top:693px;width:1px;height:161px;background:#d8dbe6"></div>
<div class="a" style="left:1328px;top:693px;width:1px;height:161px;background:#d8dbe6"></div>
<div class="a" style="left:1860px;top:693px;width:9px;height:161px;background:#d5d7d9;border-radius:0 0 4px 4px"></div>
<div class="a" style="left:1860px;top:693px;width:9px;height:30px;background:#aac0d6;border-radius:5px"></div>
<div class="a" style="left:1px;top:992px;width:1904px;height:8px;background:#d2d6d9"></div>
<div class="a" style="left:1px;top:1000px;width:1904px;height:1px;background:#7b7b7b"></div>
<div class="a" style="left:1px;top:1001px;width:1904px;height:31px;background:#d2d6d9"></div>
<div class="t" style="left:714px;top:1009px;font-size:14.9px;line-height:15px;color:#222">© 2023 Planet DDS | <span style="color:#1f5fbf;text-decoration:underline">Privacy Policy</span> |&nbsp; Page Time Left (hh:mm:ss) 1:59:1</div>
</body></html>
